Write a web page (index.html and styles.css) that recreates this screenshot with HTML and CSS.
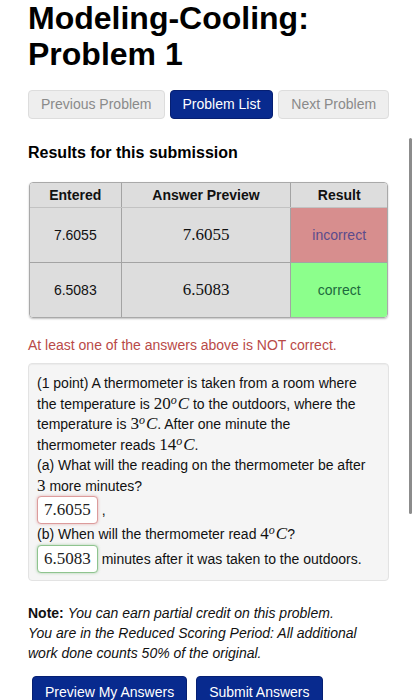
FILE: index.html
```html
<!DOCTYPE html>
<html lang="en">
<head>
<meta charset="utf-8">
<title>Modeling-Cooling: Problem 1</title>
<link rel="stylesheet" href="styles.css">
</head>
<body>
<div class="page">
  <h1 class="title">Modeling-Cooling:<br>Problem 1</h1>

  <div class="nav">
    <span class="btn btn-disabled">Previous Problem</span>
    <span class="btn btn-primary">Problem List</span>
    <span class="btn btn-disabled">Next Problem</span>
  </div>

  <h2 class="subtitle">Results for this submission</h2>

  <div class="table-wrap">
    <table class="results">
      <thead>
        <tr>
          <th class="c1">Entered</th>
          <th class="c2">Answer Preview</th>
          <th class="c3">Result</th>
        </tr>
      </thead>
      <tbody>
        <tr>
          <td class="c1">7.6055</td>
          <td class="c2 preview">7.6055</td>
          <td class="c3 incorrect">incorrect</td>
        </tr>
        <tr>
          <td class="c1">6.5083</td>
          <td class="c2 preview">6.5083</td>
          <td class="c3 correct">correct</td>
        </tr>
      </tbody>
    </table>
  </div>

  <p class="error">At least one of the answers above is NOT correct.</p>

  <div class="problem">
    <p class="ptext">(1 point) A thermometer is taken from a room where the temperature is <span class="m">20<sup>o</sup><i>C</i></span> to the outdoors, where the temperature is <span class="m">3<sup>o</sup><i>C</i></span>. After one minute the thermometer reads <span class="m">14<sup>o</sup><i>C</i></span>.</p>
    <p class="ptext">(a) What will the reading on the thermometer be after <span class="m">3</span> more minutes?</p>
    <div class="ans"><span class="input bad">7.6055</span> ,</div>
    <p class="ptext">(b) When will the thermometer read <span class="m">4<sup>o</sup><i>C</i></span>?</p>
    <div class="ans"><span class="input good">6.5083</span> minutes after it was taken to the outdoors.</div>
  </div>

  <p class="note"><b>Note:</b> <i>You can earn partial credit on this problem.</i><br><i>You are in the Reduced Scoring Period: All additional work done counts 50% of the original.</i></p>

  <div class="submit">
    <span class="btn btn-primary btn-big">Preview My Answers</span>
    <span class="btn btn-primary btn-big">Submit Answers</span>
  </div>
</div>
<div class="scrollbar"></div>
</body>
</html>
```

FILE: styles.css
```css
html, body {
  margin: 0;
  padding: 0;
  background: #ffffff;
}

body {
  font-family: "Liberation Sans", Arial, Helvetica, sans-serif;
  color: #222222;
  font-size: 14px;
}

.page {
  padding: 0 28px;
}

.title {
  margin: 0;
  font-size: 32px;
  line-height: 36px;
  font-weight: bold;
  color: #000000;
}

.nav {
  margin-top: 18px;
  display: flex;
  gap: 5px;
}

.btn {
  display: inline-block;
  box-sizing: border-box;
  padding: 4px 12px;
  font-size: 14px;
  line-height: 19px;
  border: 1px solid transparent;
  border-radius: 4px;
  white-space: nowrap;
}

.btn-disabled {
  background: #eeeeee;
  border-color: #dddddd;
  color: #8a8a8a;
}

.btn-primary {
  background: #082a8e;
  border-color: #061f72;
  color: #ffffff;
}

.subtitle {
  margin: 24px 0 0;
  font-size: 16px;
  line-height: 20px;
  font-weight: bold;
  color: #000000;
}

.table-wrap {
  margin: 19px 1px 0;
  border: 1px solid #a9a9a9;
  border-radius: 4px;
  overflow: hidden;
  box-shadow: 0 1px 2px rgba(0, 0, 0, 0.25);
}

.results {
  width: 100%;
  border-collapse: collapse;
  background: #dddddd;
  color: #111111;
}

.results th,
.results td {
  text-align: center;
  padding: 0;
  border: 1px solid #a3a3a3;
}

.results tr:first-child th {
  border-top: none;
}

.results tr:last-child td {
  border-bottom: none;
}

.results th:first-child,
.results td:first-child {
  border-left: none;
}

.results th:last-child,
.results td:last-child {
  border-right: none;
}

.results th {
  height: 24px;
  font-size: 14px;
  font-weight: bold;
  border-bottom-color: #c2c2c2;
}

.results td {
  height: 54px;
  font-size: 14px;
}

.c1 { width: 91px; }
.c2 { width: 170px; }
.c3 { width: 96px; }

.results .preview {
  font-family: "Liberation Serif", "Times New Roman", serif;
  font-size: 17px;
}

.results .incorrect {
  background: #d78e8e;
  color: #5b4b8c;
}

.results .correct {
  background: #8cff8c;
  color: #1d6a3e;
}

.error {
  margin: 17px 0 0;
  line-height: 20px;
  color: #b94a48;
}

.problem {
  margin-top: 8px;
  background: #f5f5f5;
  border: 1px solid #e3e3e3;
  border-radius: 4px;
  padding: 9px 17px 7px 8px;
  color: #111111;
  box-shadow: inset 0 1px 1px rgba(0, 0, 0, 0.04);
}

.ptext {
  margin: 0;
  line-height: 20.5px;
}

.m {
  font-family: "Liberation Serif", "Times New Roman", serif;
  font-size: 17px;
  line-height: 1;
}

.m i {
  font-style: italic;
  margin-left: 1px;
}

.m sup {
  font-style: italic;
  font-size: 12px;
  line-height: 0;
  vertical-align: 0.45em;
}

.ans {
  line-height: 28px;
  height: 28px;
}

.input {
  display: inline-block;
  box-sizing: border-box;
  height: 28px;
  padding: 0 6px;
  line-height: 26px;
  vertical-align: top;
  background: #ffffff;
  border: 1px solid #cccccc;
  border-radius: 4px;
  font-family: "Liberation Serif", "Times New Roman", serif;
  font-size: 17px;
  color: #222222;
}

.input.bad {
  border-color: #dc9c9c;
  box-shadow: 0 0 3px rgba(210, 90, 90, 0.45);
}

.input.good {
  border-color: #8fc48f;
  box-shadow: 0 0 3px rgba(70, 160, 70, 0.45);
}

.note {
  margin: 22px 0 0;
  line-height: 20px;
  color: #111111;
}

.submit {
  margin-top: 13px;
  padding-left: 4px;
  display: flex;
  gap: 9px;
}

.btn-big {
  padding: 5px 12px;
  line-height: 20px;
}

.scrollbar {
  position: absolute;
  top: 138px;
  right: 5px;
  width: 3px;
  height: 376px;
  background: #8c8c8c;
  border-radius: 2px;
}
```
